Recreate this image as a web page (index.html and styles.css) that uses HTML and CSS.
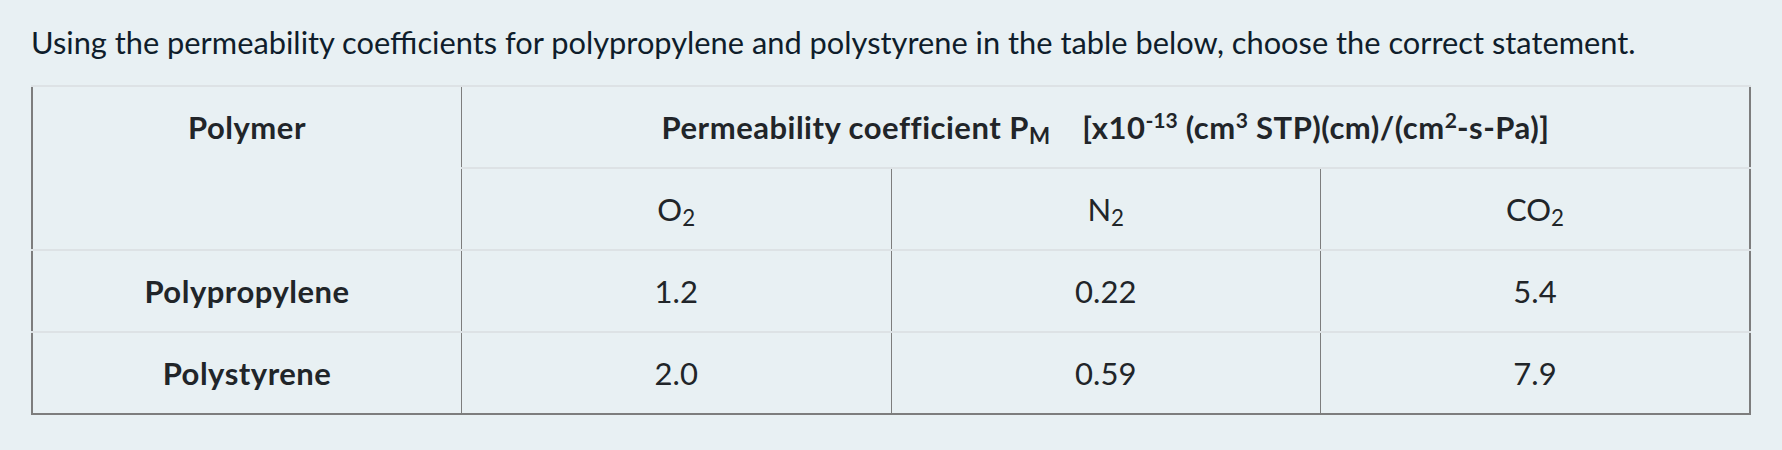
FILE: index.html
```html
<!DOCTYPE html>
<html lang="en">
<head>
<meta charset="utf-8">
<title>Permeability coefficients</title>
<link rel="stylesheet" href="styles.css">
</head>
<body>
<main class="question">
  <p class="prompt">Using the permeability coefficients for polypropylene and polystyrene in the table below, choose the correct statement.</p>
  <table class="data">
    <colgroup><col><col><col><col></colgroup>
    <tbody>
      <tr>
        <td class="head polymer" rowspan="2">Polymer</td>
        <td class="head" colspan="3">Permeability coefficient P<sub>M</sub>&nbsp;&nbsp;&nbsp; [x10<sup>-13</sup> (cm<sup>3</sup> STP)(cm)/(cm<sup>2</sup>-s-Pa)]</td>
      </tr>
      <tr>
        <td>O<sub>2</sub></td>
        <td>N<sub>2</sub></td>
        <td>CO<sub>2</sub></td>
      </tr>
      <tr>
        <td class="head">Polypropylene</td>
        <td>1.2</td>
        <td>0.22</td>
        <td>5.4</td>
      </tr>
      <tr>
        <td class="head">Polystyrene</td>
        <td>2.0</td>
        <td>0.59</td>
        <td>7.9</td>
      </tr>
    </tbody>
  </table>
</main>
</body>
</html>
```
FILE: styles.css
```css
html, body {
  margin: 0;
  padding: 0;
  background: #e8f0f3;
}
.question {
  padding: 20px 31px 0 31px;
  font-family: Lato, "Liberation Sans", sans-serif;
}
.prompt {
  margin: 0 0 19px 0;
  font-size: 30.8px;
  line-height: 46px;
  color: #0f1d2b;
}
.data {
  border-collapse: collapse;
  table-layout: fixed;
  width: 1720px;
  font-size: 31px;
  line-height: 46px;
  color: #212529;
  border-top: 2px solid #dde2e5;
  border-left: 2px solid #7d7d7d;
  border-right: 2px solid #7d7d7d;
  border-bottom: 2px solid #7d7d7d;
}
.data tr {
  height: 82px;
}
.data td {
  padding: 0 12px;
  text-align: center;
  vertical-align: middle;
  border-top: 2px solid #dde2e5;
  border-bottom: 2px solid #dde2e5;
  border-left: 1.5px solid #7d7d7d;
  border-right: 1.5px solid #7d7d7d;
  white-space: nowrap;
}
.data tr:last-child td {
  border-bottom: 2px solid #7d7d7d;
}
.data td.head {
  font-weight: 700;
  letter-spacing: 0.5px;
}
.data td.polymer {
  vertical-align: top;
  padding-top: 17px;
}
.data sub {
  font-size: 0.72em;
  line-height: 0;
  vertical-align: -0.22em;
  letter-spacing: 0;
}
.data sup {
  font-size: 0.68em;
  line-height: 0;
  vertical-align: 0.5em;
  letter-spacing: 0;
}
```
